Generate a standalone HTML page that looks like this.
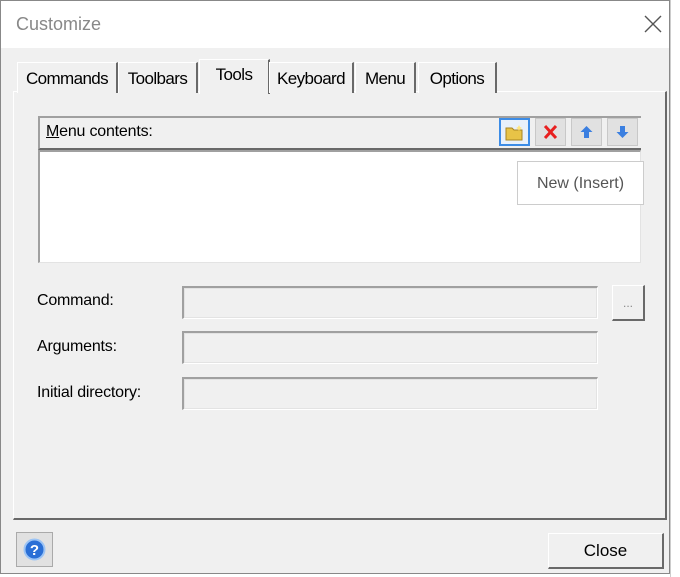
<!DOCTYPE html><html><head><style>
body{margin:0;width:680px;height:577px;background:#fff;position:relative;overflow:hidden;font-family:"Liberation Sans",sans-serif;}
.a{position:absolute;box-sizing:border-box}
.t{font-size:16px;color:#000;letter-spacing:-0.2px}
.in{background:#f0f0f0;border-top:2px solid #a0a0a0;border-left:2px solid #a0a0a0;border-right:1px solid #fff;border-bottom:1px solid #fff;box-shadow:inset 0 0 0 1px #e3e3e3}
.btn{background:#f0f0f0;border-top:1px solid #fff;border-left:1px solid #fff;border-right:2px solid #696969;border-bottom:2px solid #696969}
.tab{position:absolute;top:62px;height:30px;background:#f0f0f0;border-top:1px solid #fff;border-left:1px solid #fff;border-right:2px solid #696969;font-size:17px;line-height:31px;text-align:center;letter-spacing:-0.6px}
.ib{position:absolute;top:118px;width:31px;height:28px;background:#e1e1e1;border:1px solid #c8c8c8;box-sizing:border-box}
</style></head><body>
<div class="a" style="left:0;top:0;width:670px;height:574px;border:1px solid #888;background:#f0f0f0"></div>
<div class="a" style="left:1px;top:1px;width:668px;height:47px;background:#fff"></div>
<div class="a" style="left:16px;top:14px;font-size:18px;color:#888">Customize</div>
<svg class="a" style="left:644px;top:15px" width="18" height="18"><path d="M1 1L17 17M17 1L1 17" stroke="#555" stroke-width="1.4"/></svg>
<div class="a" style="left:670px;top:0;width:10px;height:577px;background:#fff;border-left:1px solid #ccc"></div>
<div class="a" style="left:13px;top:91px;width:654px;height:429px;border-top:1px solid #fff;border-left:1px solid #fff;border-right:2px solid #696969;border-bottom:2px solid #696969"></div>
<div class="tab" style="left:17px;width:98px">Commands</div>
<div class="tab" style="left:118px;width:77px">Toolbars</div>
<div class="tab" style="left:199px;top:59px;height:34px;width:68px;line-height:30px">Tools</div>
<div class="tab" style="left:269px;width:82px">Keyboard</div>
<div class="tab" style="left:355px;width:58px">Menu</div>
<div class="tab" style="left:418px;width:76px">Options</div>
<div class="a" style="left:38px;top:116px;width:603px;height:34px;border-top:2px solid #a0a0a0;border-left:2px solid #a0a0a0;border-bottom:2px solid #696969"></div>
<div class="a t" style="left:46px;top:123px"><u>M</u>enu contents:</div>
<div class="ib" style="left:499px;border:2px solid #3c8ce6;background:#e8f0fa"><svg width="27" height="24"><path d="M5 8h6l2 2h8v10H5z" fill="#e8c347" stroke="#a88420"/><path d="M18 5l1 2 2 1-2 1-1 2-1-2-2-1 2-1z" fill="#ffe680"/></svg></div>
<div class="ib" style="left:535px"><svg width="29" height="26"><path d="M9 7l11 12M20 7L9 19" stroke="#e82020" stroke-width="3"/></svg></div>
<div class="ib" style="left:571px"><svg width="29" height="26"><path d="M14.5 7l6 6h-3.5v6h-5v-6H8.5z" fill="#3b7fe0"/></svg></div>
<div class="ib" style="left:607px"><svg width="29" height="26"><path d="M14.5 19l6-6h-3.5V7h-5v6H8.5z" fill="#3b7fe0"/></svg></div>
<div class="a" style="left:38px;top:150px;width:603px;height:113px;background:#fff;border-top:2px solid #a0a0a0;border-left:2px solid #a0a0a0;border-right:1px solid #e3e3e3;border-bottom:1px solid #e3e3e3"></div>
<div class="a" style="left:517px;top:161px;width:127px;height:44px;background:#fff;border:1px solid #ccc;font-size:16px;color:#555;line-height:44px;text-align:center">New (Insert)</div>
<div class="a t" style="left:37px;top:292px">Command:</div>
<div class="a t" style="left:37px;top:338px">Arguments:</div>
<div class="a t" style="left:37px;top:384px">Initial directory:</div>
<div class="a in" style="left:182px;top:286px;width:416px;height:33px"></div>
<div class="a in" style="left:182px;top:331px;width:416px;height:33px"></div>
<div class="a in" style="left:182px;top:377px;width:416px;height:33px"></div>
<div class="a btn" style="left:612px;top:285px;width:33px;height:36px;text-align:center;color:#888;font-size:12px;line-height:34px">...</div>
<div class="a" style="left:16px;top:532px;width:37px;height:35px;background:#e1e1e1;border:1px solid #aaa"><svg width="35" height="33"><circle cx="17.5" cy="16.5" r="10" fill="#2a6fd6" stroke="#9cc4f5" stroke-width="2"/><text x="17.5" y="22" text-anchor="middle" font-size="15" font-weight="bold" fill="#fff" font-family="Liberation Sans">?</text></svg></div>
<div class="a btn" style="left:548px;top:533px;width:116px;height:36px;text-align:center;line-height:34px;font-size:17px">Close</div>
</body></html>
